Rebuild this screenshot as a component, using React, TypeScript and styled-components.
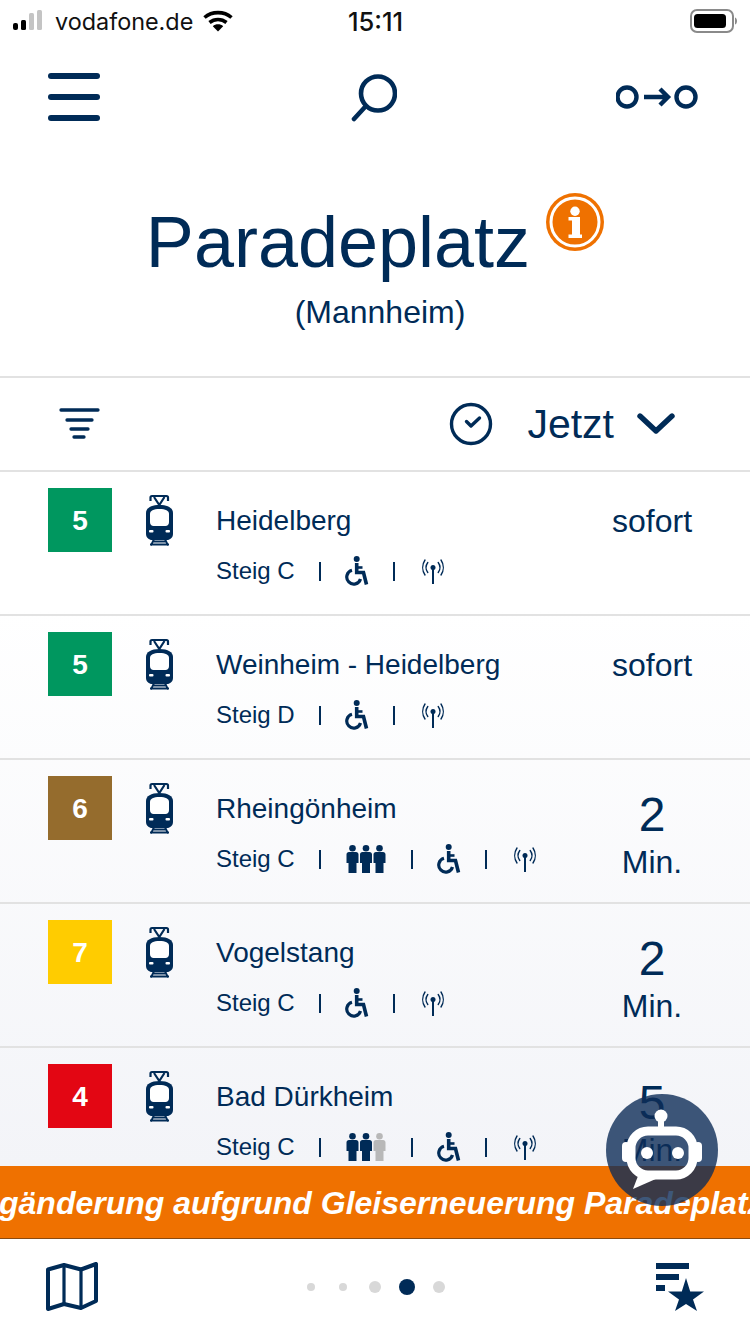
import React from "react";
import styled, { createGlobalStyle } from "styled-components";

const navy = "#002b57";

const departures = [
  { id: 1, line: "5", color: "#00975f", dest: "Heidelberg", steig: "Steig C", time: "sofort" },
  { id: 2, line: "5", color: "#00975f", dest: "Weinheim - Heidelberg", steig: "Steig D", time: "sofort" },
  { id: 3, line: "6", color: "#956c2d", dest: "Rheingönheim", steig: "Steig C", time: "2", load: 3 },
  { id: 4, line: "7", color: "#ffcc00", dest: "Vogelstang", steig: "Steig C", time: "2" },
  { id: 5, line: "4", color: "#e30613", dest: "Bad Dürkheim", steig: "Steig C", time: "5", load: 2 },
];

const SignalIcon = () => (
  <svg width="34" height="22" viewBox="0 0 34 22">
    <rect x="0" y="13" width="5" height="7" rx="2" fill="#000" />
    <rect x="8" y="10" width="5" height="10" rx="1.5" fill="#000" />
    <rect x="16" y="3" width="5" height="17" rx="1.5" fill="#c4c4c4" />
    <rect x="24" y="0" width="5" height="20" rx="1.5" fill="#c4c4c4" />
  </svg>
);

const WifiIcon = () => (
  <svg width="30" height="22" viewBox="0 0 30 22" fill="none" stroke="#000" strokeWidth="3.6">
    <path d="M1.500 7.500C9 1 21 1 28.500 7.500" />
    <path d="M6.500 12.500C11.500 8.500 18.500 8.500 23.500 12.500" />
    <path d="M15 21.500L9.800 16.200C12.500 13.600 17.500 13.600 20.200 16.200Z" fill="#000" stroke="none" />
  </svg>
);

const BatteryIcon = () => (
  <svg width="48" height="24" viewBox="0 0 48 24">
    <rect x="1" y="1" width="42" height="22" rx="6" fill="none" stroke="#8a8a8a" strokeWidth="2" />
    <rect x="4" y="5" width="32" height="14" rx="3.500" fill="#000" />
    <path d="M45 8.500C46.500 9 47 10.500 47 12S46.500 15 45 15.500Z" fill="#8a8a8a" />
  </svg>
);

const SearchIcon = () => (
  <svg width="48" height="50" viewBox="-2 0 48 50" fill="none" stroke={navy} strokeWidth="4.600" strokeLinecap="round">
    <circle cx="27" cy="21.500" r="17" />
    <path d="M14 35L3 47" />
  </svg>
);

const RouteIcon = () => (
  <svg width="82" height="26" viewBox="0 0 82 26" fill="none" stroke={navy} strokeWidth="4.400">
    <circle cx="11" cy="13" r="9.500" />
    <circle cx="70" cy="13" r="9.500" />
    <path d="M28 13H51M44 5L52 13L44 21" />
  </svg>
);

const InfoIcon = () => (
  <svg width="58" height="58" viewBox="0 0 58 58">
    <circle cx="29" cy="29" r="29" fill="#ef7100" />
    <circle cx="29" cy="29" r="24" fill="none" stroke="#fff" strokeWidth="3" />
    <circle cx="29" cy="18.300" r="4.700" fill="#fff" />
    <path d="M22.500 24H34V41.500H36V45H22.500V41.500H26V27.500H22.500Z" fill="#fff" />
  </svg>
);

const FilterIcon = () => (
  <svg width="42" height="34" viewBox="0 0 42 34" stroke={navy} strokeWidth="3.300" strokeLinecap="round">
    <path d="M3 3H40M9 13H34M13 22H30M16 30H26" />
  </svg>
);

const ClockIcon = () => (
  <svg width="44" height="44" viewBox="0 0 44 44" fill="none" stroke={navy} strokeWidth="3.400" strokeLinecap="round" strokeLinejoin="round">
    <circle cx="22" cy="22" r="19.500" />
    <path d="M17.500 19.500L22 24L30.500 16" />
  </svg>
);

const ChevronIcon = () => (
  <svg width="40" height="24" viewBox="0 0 40 24" fill="none" stroke={navy} strokeWidth="5.400" strokeLinecap="round" strokeLinejoin="round">
    <path d="M4 4L20 19L36 4" />
  </svg>
);

const TramIcon = () => (
  <svg width="28" height="52" viewBox="0 0 28 52" fill="none" stroke={navy}>
    <path d="M4.500 7V3.500C4.500 2.500 5 2 6 2H20.500C21.500 2 22 2.500 22 3.500V7M8 3L13.300 11L18.500 3" strokeWidth="2.200" />
    <path d="M0 40V19C0 14 5 11 13.500 11S27 14 27 19V40C27 43.500 24 46 21 46H6C3 46 0 43.500 0 40Z" fill={navy} stroke="none" />
    <path d="M4 28V20C4 16.500 7.500 15 13.500 15S23 16.500 23 20V28C23 30.500 21.500 32 19.500 32H7.500C5.500 32 4 30.500 4 28Z" fill="#fff" stroke="none" />
    <rect x="3" y="36" width="4.500" height="2.500" rx="1" fill="#fff" stroke="none" />
    <rect x="19.500" y="36" width="4.500" height="2.500" rx="1" fill="#fff" stroke="none" />
    <path d="M8 45L5 51.500M19 45L22 51.500M6.500 47.500H20.500M4 50.500H23" strokeWidth="1.800" />
  </svg>
);

const WheelchairIcon = () => (
  <svg width="24" height="30" viewBox="0 0 24 30">
    <circle cx="11.700" cy="3" r="3" fill={navy} />
    <path d="M11.700 7V16.500H18.500L21.500 28.500" fill="none" stroke={navy} strokeWidth="3.600" />
    <path d="M11.700 11.500H17.500" fill="none" stroke={navy} strokeWidth="2.600" />
    <path d="M7 14.300A7 7 0 1 0 15.500 23" fill="none" stroke={navy} strokeWidth="3.200" />
  </svg>
);

const AntennaIcon = () => (
  <svg width="28" height="26" viewBox="0 0 28 26" fill="none" stroke={navy} strokeWidth="1.400" strokeLinecap="round">
    <circle cx="14" cy="9.500" r="2.500" fill={navy} stroke="none" />
    <path d="M14 10V25.500" strokeWidth="2" />
    <path d="M8.800 4.500C6.600 7.500 6.600 11.500 8.800 14.500M19.200 4.500C21.400 7.500 21.400 11.500 19.200 14.500" />
    <path d="M6 2C3 6.500 3 12.500 6 17M22 2C25 6.500 25 12.500 22 17" />
  </svg>
);

const Person = ({ x, fill }: { x: number; fill: string }) => (
  <g transform={`translate(${x} 0)`} fill={fill}>
    <circle cx="6" cy="3.300" r="3.300" />
    <path d="M2.500 7H9.500C11 7 12 8 12 9.500V18H10V28H2V18H0V9.500C0 8 1 7 2.500 7Z" />
  </g>
);

const PeopleIcon = ({ load }: { load: number }) => (
  <svg width="42" height="28" viewBox="0 0 42 28">
    {[1.500, 15, 28.500].map((x, i) => (
      <Person key={x} x={x} fill={i < load ? navy : "#b8b8b8"} />
    ))}
  </svg>
);

const BotIcon = () => (
  <svg width="112" height="112" viewBox="0 0 112 112">
    <circle cx="55" cy="22" r="6.500" fill="#fff" />
    <rect x="52" y="24" width="6" height="12" fill="#fff" />
    <rect x="25" y="37" width="62" height="44" rx="17" fill="none" stroke="#fff" strokeWidth="9" />
    <rect x="16" y="48" width="8" height="20" rx="4" fill="#fff" />
    <rect x="88" y="48" width="8" height="20" rx="4" fill="#fff" />
    <circle cx="41" cy="59" r="6" fill="#fff" />
    <circle cx="72" cy="59" r="6" fill="#fff" />
    <path d="M32 82L27 95L52 84Z" fill="#fff" />
  </svg>
);

const MapIcon = () => (
  <svg width="54" height="50" viewBox="1 0 54 50" fill="none" stroke={navy} strokeLinejoin="round">
    <path d="M3 7.500L19 3L36 7.500L51 2V39L36 46L19 42L3 47Z" strokeWidth="4" />
    <path d="M19 3V42M36 7.500V46" strokeWidth="3.200" />
  </svg>
);

const FavoritesIcon = () => (
  <svg width="50" height="50" viewBox="-1 0 50 50" fill={navy}>
    <rect x="1" y="1" width="33" height="6" />
    <rect x="1" y="12" width="23" height="6" />
    <rect x="1" y="23" width="9" height="6" />
    <path d="M31 16L35.200 29.500H49L38 37.500L42 49L31 42L20 49L24 37.500L13 29.500H26.800Z" />
  </svg>
);

export default function App() {
  return (
    <>
      <GlobalStyle />
      <Page>
        <StatusBar>
          <Carrier>
            <SignalIcon />
            <span>vodafone.de</span>
            <WifiIcon />
          </Carrier>
          <Clock>15:11</Clock>
          <Battery>
            <BatteryIcon />
          </Battery>
        </StatusBar>
        <TopNav>
          <Burger>
            <span />
            <span />
            <span />
          </Burger>
          <SearchIcon />
          <RouteSlot>
            <RouteIcon />
          </RouteSlot>
        </TopNav>
        <TitleRow>
          <Title>Paradeplatz</Title>
          <InfoIcon />
        </TitleRow>
        <SubTitle>(Mannheim)</SubTitle>
        <FilterBar>
          <FilterIcon />
          <TimeSelect>
            <ClockIcon />
            <TimeLabel>Jetzt</TimeLabel>
            <ChevronIcon />
          </TimeSelect>
        </FilterBar>
        <List>
          {departures.map(({ id, line, color, dest, steig, time, load }) => (
            <Row key={id}>
              <LineBadge $bg={color}>{line}</LineBadge>
              <TramSlot>
                <TramIcon />
              </TramSlot>
              <Info>
                <Destination>{dest}</Destination>
                <Meta>
                  <Steig>{steig}</Steig>
                  <Pipe />
                  {load && <PeopleIcon load={load} />}
                  {load && <Pipe />}
                  <WheelchairIcon />
                  <Pipe />
                  <AntennaIcon />
                </Meta>
              </Info>
              {time === "sofort" ? (
                <Due>
                  <Now>sofort</Now>
                </Due>
              ) : (
                <Due>
                  <Minutes>{time}</Minutes>
                  <Unit>Min.</Unit>
                </Due>
              )}
            </Row>
          ))}
        </List>
        <Ticker>
          <TickerText>gänderung aufgrund Gleiserneuerung Paradeplatz</TickerText>
        </Ticker>
        <BottomNav>
          <MapIcon />
          <Dots>
            <Dot $size={8} />
            <Dot $size={8} />
            <Dot $size={12} />
            <Dot $size={16} $active />
            <Dot $size={12} />
          </Dots>
          <FavSlot>
            <FavoritesIcon />
          </FavSlot>
        </BottomNav>
        <BotButton>
          <BotIcon />
        </BotButton>
      </Page>
    </>
  );
}

const GlobalStyle = createGlobalStyle`
  body {
    margin: 0;
    background: #fff;
    font-family: "Liberation Sans", Arial, sans-serif;
  }
`;

const Page = styled.div`
  position: relative;
  width: 750px;
  height: 1334px;
  overflow: hidden;
  display: flex;
  flex-direction: column;
  background: #fff;
  color: ${navy};
`;

const StatusBar = styled.div`
  height: 40px;
  padding: 2px 12px 0 13px;
  box-sizing: border-box;
  display: grid;
  grid-template-columns: 1fr auto 1fr;
  align-items: center;
  font-family: Inter, sans-serif;
  font-size: 23.400px;
  color: #111;
`;

const Carrier = styled.div`
  display: flex;
  align-items: center;
  gap: 8px;
  & svg:last-child {
    margin-left: 2px;
  }
`;

const Clock = styled.div`
  font-size: 25.500px;
  font-weight: 500;
`;

const Battery = styled.div`
  display: flex;
  justify-content: flex-end;
`;

const TopNav = styled.div`
  height: 48px;
  margin-top: 32px;
  padding: 0 52px 0 48px;
  display: grid;
  grid-template-columns: 1fr auto 1fr;
  align-items: center;
`;

const Burger = styled.div`
  display: flex;
  flex-direction: column;
  gap: 15px;
  width: 52px;
  & span {
    height: 6px;
    border-radius: 3px;
    background: ${navy};
  }
`;

const RouteSlot = styled.div`
  display: flex;
  justify-content: flex-end;
`;

const TitleRow = styled.div`
  margin-top: 73px;
  display: flex;
  justify-content: center;
  align-items: flex-start;
  gap: 16px;
`;

const Title = styled.h1`
  margin: 9px 0 0;
  font-size: 72px;
  line-height: 80px;
  font-weight: 400;
`;

const SubTitle = styled.div`
  margin-top: 10px;
  padding: 0 0 44px 10px;
  text-align: center;
  font-size: 32px;
  line-height: 40px;
`;

const FilterBar = styled.div`
  height: 96px;
  box-sizing: border-box;
  padding: 0 74px 0 58px;
  display: flex;
  align-items: center;
  justify-content: space-between;
  border-top: 2px solid #e2e2e2;
  border-bottom: 2px solid #e2e2e2;
`;

const TimeSelect = styled.div`
  display: flex;
  align-items: center;
`;

const TimeLabel = styled.span`
  margin: 0 22px 0 34px;
  font-size: 41px;
  line-height: 48px;
`;

const List = styled.div`
  flex: 1;
  min-height: 0;
  overflow: hidden;
  background: linear-gradient(#fff 20%, #f3f4f8 100%);
`;

const Row = styled.div`
  height: 144px;
  box-sizing: border-box;
  padding: 16px 8px 0 48px;
  display: grid;
  grid-template-columns: 64px 104px 1fr 180px;
  align-items: start;
  border-bottom: 2px solid #e2e2e2;
`;

const LineBadge = styled.div<{ $bg: string }>`
  width: 64px;
  height: 64px;
  padding-top: 2px;
  box-sizing: border-box;
  display: flex;
  align-items: center;
  justify-content: center;
  background: ${(p) => p.$bg};
  color: #fff;
  font-size: 28px;
  font-weight: 700;
`;

const TramSlot = styled.div`
  padding: 6px 0 0 34px;
`;

const Info = styled.div`
  padding-top: 17px;
`;

const Destination = styled.div`
  font-size: 28px;
  line-height: 32px;
  white-space: nowrap;
`;

const Meta = styled.div`
  margin-top: 19px;
  height: 30px;
  display: flex;
  align-items: center;
  gap: 24px;
`;

const Steig = styled.span`
  width: 79px;
  font-size: 24px;
  white-space: nowrap;
`;

const Pipe = styled.span`
  width: 2px;
  height: 19px;
  background: ${navy};
`;

const Due = styled.div`
  display: flex;
  flex-direction: column;
  align-items: center;
`;

const Now = styled.div`
  padding-top: 15px;
  font-size: 32px;
  line-height: 36px;
`;

const Minutes = styled.div`
  padding-top: 13px;
  font-size: 48px;
  line-height: 52px;
`;

const Unit = styled.div`
  margin-top: 1px;
  font-size: 32px;
  line-height: 40px;
`;

const Ticker = styled.div`
  height: 73px;
  box-sizing: border-box;
  padding-top: 2px;
  display: flex;
  align-items: center;
  overflow: hidden;
  background: #ef7100;
  border-bottom: 1px solid #8a4a10;
`;

const TickerText = styled.div`
  margin-left: -1px;
  color: #fff;
  font-size: 32px;
  font-weight: 700;
  font-style: italic;
  white-space: nowrap;
`;

const BottomNav = styled.div`
  height: 95px;
  padding: 0 46px;
  display: grid;
  grid-template-columns: 1fr auto 1fr;
  align-items: center;
  box-sizing: border-box;
`;

const FavSlot = styled.div`
  display: flex;
  justify-content: flex-end;
`;

const Dots = styled.div`
  display: grid;
  grid-template-columns: repeat(5, 32px);
  align-items: center;
  justify-items: center;
`;

const Dot = styled.span<{ $size: number; $active?: boolean }>`
  width: ${(p) => p.$size}px;
  height: ${(p) => p.$size}px;
  border-radius: 50%;
  background: ${(p) => (p.$active ? navy : "#d8d8d8")};
`;

const BotButton = styled.div`
  position: absolute;
  left: 606px;
  top: 1094px;
  width: 112px;
  height: 112px;
  border-radius: 50%;
  background: rgba(14, 45, 88, 0.8);
`;
